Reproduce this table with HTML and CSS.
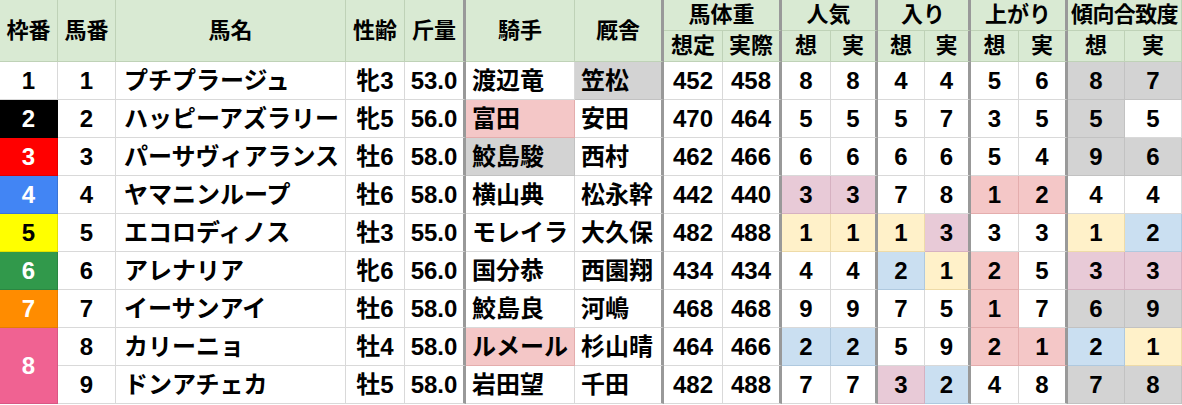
FILE: index.html
```html
<!DOCTYPE html>
<html lang="ja">
<head>
<meta charset="utf-8">
<title>出馬表</title>
<link rel="stylesheet" href="styles.css">
</head>
<body>
<div class="sheet">
  <div class="h r2">枠番</div>
  <div class="h r2">馬番</div>
  <div class="h r2">馬名</div>
  <div class="h r2">性齢</div>
  <div class="h r2 t">斤量</div>
  <div class="h r2">騎手</div>
  <div class="h r2 t">厩舎</div>
  <div class="h c2 t">馬体重</div>
  <div class="h c2 t">人気</div>
  <div class="h c2 t">入り</div>
  <div class="h c2 t">上がり</div>
  <div class="h c2 narrow">傾向合致度</div>
  <div class="h">想定</div><div class="h t">実際</div>
  <div class="h">想</div><div class="h t">実</div>
  <div class="h">想</div><div class="h t">実</div>
  <div class="h">想</div><div class="h t">実</div>
  <div class="h">想</div><div class="h">実</div>

  <div class="w1">1</div><div>1</div><div class="l">プチプラージュ</div><div>牝3</div><div class="t">53.0</div>
  <div class="l2">渡辺竜</div><div class="l2 gy t">笠松</div><div>452</div><div class="t">458</div>
  <div>8</div><div class="t">8</div><div>4</div><div class="t">4</div><div>5</div><div class="t">6</div><div class="gy">8</div><div class="gy">7</div>

  <div class="w2">2</div><div>2</div><div class="l">ハッピーアズラリー</div><div>牝5</div><div class="t">56.0</div>
  <div class="l2 pk">富田</div><div class="l2 t">安田</div><div>470</div><div class="t">464</div>
  <div>5</div><div class="t">5</div><div>5</div><div class="t">7</div><div>3</div><div class="t">5</div><div class="gy">5</div><div>5</div>

  <div class="w3">3</div><div>3</div><div class="l">パーサヴィアランス</div><div>牡6</div><div class="t">58.0</div>
  <div class="l2 gy">鮫島駿</div><div class="l2 t">西村</div><div>462</div><div class="t">466</div>
  <div>6</div><div class="t">6</div><div>6</div><div class="t">6</div><div>5</div><div class="t">4</div><div class="gy">9</div><div class="gy">6</div>

  <div class="w4">4</div><div>4</div><div class="l">ヤマニンループ</div><div>牡6</div><div class="t">58.0</div>
  <div class="l2">横山典</div><div class="l2 t">松永幹</div><div>442</div><div class="t">440</div>
  <div class="pu">3</div><div class="pu t">3</div><div>7</div><div class="t">8</div><div class="pk">1</div><div class="pk t">2</div><div>4</div><div>4</div>

  <div class="w5">5</div><div>5</div><div class="l">エコロディノス</div><div>牡3</div><div class="t">55.0</div>
  <div class="l2">モレイラ</div><div class="l2 t">大久保</div><div>482</div><div class="t">488</div>
  <div class="ye">1</div><div class="ye t">1</div><div class="ye">1</div><div class="pu t">3</div><div>3</div><div class="t">3</div><div class="ye">1</div><div class="bl">2</div>

  <div class="w6">6</div><div>6</div><div class="l">アレナリア</div><div>牝6</div><div class="t">56.0</div>
  <div class="l2">国分恭</div><div class="l2 t">西園翔</div><div>434</div><div class="t">434</div>
  <div>4</div><div class="t">4</div><div class="bl">2</div><div class="ye t">1</div><div class="pk">2</div><div class="t">5</div><div class="pu">3</div><div class="pu">3</div>

  <div class="w7">7</div><div>7</div><div class="l">イーサンアイ</div><div>牡6</div><div class="t">58.0</div>
  <div class="l2">鮫島良</div><div class="l2 t">河嶋</div><div>468</div><div class="t">468</div>
  <div>9</div><div class="t">9</div><div>7</div><div class="t">5</div><div class="pk">1</div><div class="t">7</div><div class="gy">6</div><div class="gy">9</div>

  <div class="w8 r2">8</div><div>8</div><div class="l">カリーニョ</div><div>牡4</div><div class="t">58.0</div>
  <div class="l2 pk">ルメール</div><div class="l2 t">杉山晴</div><div>464</div><div class="t">466</div>
  <div class="bl">2</div><div class="bl t">2</div><div>5</div><div class="t">9</div><div class="pk">2</div><div class="pk t">1</div><div class="bl">2</div><div class="ye">1</div>

  <div>9</div><div class="l">ドンアチェカ</div><div>牡5</div><div class="t">58.0</div>
  <div class="l2">岩田望</div><div class="l2 t">千田</div><div>482</div><div class="t">488</div>
  <div>7</div><div class="t">7</div><div class="pu">3</div><div class="bl t">2</div><div>4</div><div class="t">8</div><div class="gy">7</div><div class="gy">8</div>
</div>
</body>
</html>
```

FILE: styles.css
```css
body {
  margin: 0;
  background: #ffffff;
}

.sheet {
  display: grid;
  grid-template-columns: 58px 58px 230px 59px 61px 109px 89px 59px 59px 49px 47px 47px 46px 48px 49px 57px 57px;
  grid-template-rows: 31px 31px repeat(9, 38px);
  font-family: "Liberation Sans", "Noto Sans CJK JP", sans-serif;
  font-weight: 700;
  color: #000000;
}

.sheet > div {
  box-sizing: border-box;
  border-right: 1px solid #d9d9d9;
  border-bottom: 1px solid #d9d9d9;
  display: flex;
  align-items: center;
  justify-content: center;
  font-size: 24px;
  line-height: 1;
  white-space: nowrap;
  overflow: hidden;
}

.sheet > .h {
  background: #d9ead3;
  border-color: #bfd2b7;
  font-size: 22px;
}

.sheet > .narrow {
  letter-spacing: -0.6px;
}

.sheet > .r2 {
  grid-row: span 2;
}

.sheet > .c2 {
  grid-column: span 2;
}

.sheet > .l {
  justify-content: flex-start;
  padding-left: 8px;
}

.sheet > .l2 {
  justify-content: flex-start;
  padding-left: 6px;
}

/* cell fills */
.sheet > .gy {
  background: #d3d3d3;
  border-color: #c2c2c2;
}

.sheet > .pk {
  background: #f4c7c7;
  border-color: #e4adad;
}

.sheet > .pu {
  background: #e8cad7;
  border-color: #d6b1c1;
}

.sheet > .ye {
  background: #fff1c9;
  border-color: #eedba8;
}

.sheet > .bl {
  background: #cadff1;
  border-color: #afc9df;
}

/* waku (frame) colours */
.sheet > .w1 {
  background: #ffffff;
}

.sheet > .w2 {
  background: #000000;
  border-color: #000000;
  color: #ffffff;
}

.sheet > .w3 {
  background: #ff0000;
  border-color: #e00000;
  color: #ffffff;
}

.sheet > .w4 {
  background: #4285f4;
  border-color: #3a74d6;
  color: #ffffff;
}

.sheet > .w5 {
  background: #ffff00;
  border-color: #e3e000;
  color: #000000;
}

.sheet > .w6 {
  background: #31994b;
  border-color: #2a8641;
  color: #ffffff;
}

.sheet > .w7 {
  background: #ff8c00;
  border-color: #e67e00;
  color: #ffffff;
}

.sheet > .w8 {
  background: #f06292;
  border-color: #d95784;
  color: #ffffff;
}

/* thick group separators */
.sheet > .t {
  border-right: 3px solid #999999;
}
```
